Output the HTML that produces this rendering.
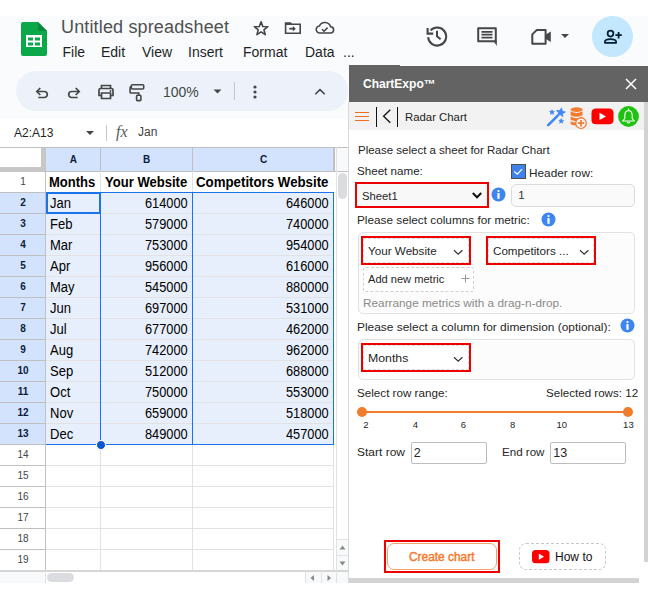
<!DOCTYPE html>
<html><head><meta charset="utf-8"><style>
html,body{margin:0;padding:0;}
body{width:648px;height:599px;position:relative;overflow:hidden;background:#fff;font-family:"Liberation Sans", sans-serif;}
body>div{position:absolute;}
.t{white-space:nowrap;}
</style></head><body>
<div style="left:0px;top:0px;width:648px;height:16px;background:#fff"></div>
<div style="left:0px;top:16px;width:648px;height:103px;background:#f9fbfd"></div>
<div style="left:0px;top:119px;width:349px;height:28px;background:#fff"></div>
<svg style="position:absolute;left:21px;top:22px;" width="26" height="34" viewBox="0 0 26 34">
<path d="M2 0 H17 L26 9 V32 Q26 34 24 34 H2 Q0 34 0 32 V2 Q0 0 2 0Z" fill="#0ba84a"/>
<path d="M17 0 L26 9 H19 Q17 9 17 7Z" fill="#0a8a3c"/>
<rect x="5" y="13" width="16" height="12" fill="#fff"/>
<rect x="7" y="15.5" width="5" height="3" fill="#0ba84a"/>
<rect x="14" y="15.5" width="5" height="3" fill="#0ba84a"/>
<rect x="7" y="20.5" width="5" height="3" fill="#0ba84a"/>
<rect x="14" y="20.5" width="5" height="3" fill="#0ba84a"/>
</svg>
<div class="t" style="left:61px;top:17.76px;font-size:18px;line-height:18px;color:#505050;font-weight:400;letter-spacing:0.15px">Untitled spreadsheet</div>
<svg style="position:absolute;left:252px;top:19px;" width="18" height="17" viewBox="0 0 18 17"><polygon points="9.10,2.80 10.86,7.47 15.85,7.71 11.95,10.83 13.27,15.64 9.10,12.90 4.93,15.64 6.25,10.83 2.35,7.71 7.34,7.47" fill="none" stroke="#444746" stroke-width="1.6" stroke-linejoin="round"/></svg>
<svg style="position:absolute;left:284px;top:21px;" width="18" height="14" viewBox="0 0 18 14"><path d="M1.6 3.2 H16.2 V12.2 H1.6Z" fill="none" stroke="#444746" stroke-width="1.6"/><path d="M0.8 1.2 H6.8 L8.3 3 H0.8Z" fill="#444746"/><path d="M5.3 7.7 H10.5" stroke="#444746" stroke-width="1.8"/><path d="M8.8 5 L11.8 7.7 L8.8 10.4Z" fill="#444746"/></svg>
<svg style="position:absolute;left:315px;top:21px;" width="20" height="14" viewBox="0 0 20 14"><path d="M5 12 H15.3 A3.1 3.1 0 0 0 15.6 5.8 A6 6 0 0 0 4.4 5 A3.5 3.5 0 0 0 5 12Z" fill="none" stroke="#444746" stroke-width="1.6"/><path d="M7 8.3 L9 10.2 L12.6 6.6" fill="none" stroke="#444746" stroke-width="1.5"/></svg>
<div class="t" style="left:62.5px;top:44.75px;font-size:14px;line-height:14px;color:#1f1f1f;font-weight:400;">File</div>
<div class="t" style="left:101px;top:44.75px;font-size:14px;line-height:14px;color:#1f1f1f;font-weight:400;">Edit</div>
<div class="t" style="left:142px;top:44.75px;font-size:14px;line-height:14px;color:#1f1f1f;font-weight:400;">View</div>
<div class="t" style="left:188px;top:44.75px;font-size:14px;line-height:14px;color:#1f1f1f;font-weight:400;">Insert</div>
<div class="t" style="left:243px;top:44.75px;font-size:14px;line-height:14px;color:#1f1f1f;font-weight:400;">Format</div>
<div class="t" style="left:305px;top:44.75px;font-size:14px;line-height:14px;color:#1f1f1f;font-weight:400;">Data</div>
<div class="t" style="left:343px;top:44.75px;font-size:14px;line-height:14px;color:#1f1f1f;font-weight:400;">...</div>
<svg style="position:absolute;left:425px;top:24px;" width="24" height="24" viewBox="0 0 24 24"><path d="M5.6 6.4 A9 9 0 1 1 3.2 13.2" fill="none" stroke="#444746" stroke-width="2.1"/><path d="M2.6 4 V9.6 H8.2" fill="none" stroke="#444746" stroke-width="2.1"/><path d="M12 6.8 V12.3 L15.6 15.2" fill="none" stroke="#444746" stroke-width="2"/></svg>
<svg style="position:absolute;left:476px;top:26px;" width="22" height="22" viewBox="0 0 22 22"><path d="M2.2 2.2 H19.8 V15.2 H2.2Z" fill="none" stroke="#444746" stroke-width="2" stroke-linejoin="round"/><path d="M17.5 15 H20.8 V20 Z" fill="#444746"/><path d="M5.5 5.8 H16.5 M5.5 8.7 H16.5 M5.5 11.7 H16.5" stroke="#444746" stroke-width="1.8"/></svg>
<svg style="position:absolute;left:530px;top:28px;" width="24" height="18" viewBox="0 0 24 18"><path d="M6.6 2.1 H15.6 V15.8 H2.3 V6.4Z" fill="none" stroke="#444746" stroke-width="2" stroke-linejoin="round"/><path d="M15.6 6.7 L20.8 3.6 V13.9 L15.6 10.8Z" fill="#444746"/></svg>
<svg style="position:absolute;left:560px;top:33px;" width="10" height="6" viewBox="0 0 10 6"><path d="M1 1 H9 L5 5Z" fill="#444746"/></svg>
<svg style="position:absolute;left:592px;top:16px;" width="41" height="41" viewBox="0 0 41 41"><circle cx="20.5" cy="20.5" r="20.5" fill="#c2e7ff"/><circle cx="18.5" cy="17.6" r="2.9" fill="none" stroke="#001d35" stroke-width="1.75"/><path d="M12.9 26.8 V26 Q12.9 23.2 18.5 23.2 Q24.1 23.2 24.1 26 V26.8Z" fill="none" stroke="#001d35" stroke-width="1.75" stroke-linejoin="round"/><path d="M26.6 16 V22.4 M23.4 19.2 H29.8" stroke="#001d35" stroke-width="1.75"/></svg>
<div style="left:16px;top:71px;width:331.5px;height:40px;background:#edf2fa;border-radius:20px"></div>
<svg style="position:absolute;left:34px;top:85px;" width="16" height="16" viewBox="0 0 16 16"><path d="M3 6.5 H10.3 A3 3 0 0 1 10.3 12.5 H4.3" fill="none" stroke="#444746" stroke-width="1.7"/><path d="M6.3 3 L2.8 6.5 L6.3 10" fill="none" stroke="#444746" stroke-width="1.7"/></svg>
<svg style="position:absolute;left:66px;top:85px;" width="16" height="16" viewBox="0 0 16 16"><path d="M13 6.5 H5.7 A3 3 0 0 0 5.7 12.5 H11.7" fill="none" stroke="#444746" stroke-width="1.7"/><path d="M9.7 3 L13.2 6.5 L9.7 10" fill="none" stroke="#444746" stroke-width="1.7"/></svg>
<svg style="position:absolute;left:97px;top:84px;" width="18" height="16" viewBox="0 0 18 16"><path d="M4.5 4.5 V1.5 H13.5 V4.5" fill="none" stroke="#444746" stroke-width="1.7"/><path d="M4 11.5 H2 V6 Q2 4.5 3.5 4.5 H14.5 Q16 4.5 16 6 V11.5 H14" fill="none" stroke="#444746" stroke-width="1.7"/><path d="M4.5 9 H13.5 V14.5 H4.5Z" fill="none" stroke="#444746" stroke-width="1.7"/><circle cx="13.5" cy="7" r="0.9" fill="#444746"/></svg>
<svg style="position:absolute;left:129px;top:83px;" width="16" height="19" viewBox="0 0 16 19"><rect x="2.3" y="1.7" width="12.4" height="4.3" rx="1" fill="none" stroke="#444746" stroke-width="1.6"/><path d="M2.3 3.8 H1.9 Q1.1 3.8 1.1 4.6 V9.2 Q1.1 10 1.9 10 H9.7 V12.4" fill="none" stroke="#444746" stroke-width="1.6"/><rect x="7.6" y="12.3" width="4.3" height="5.3" rx="0.9" fill="none" stroke="#444746" stroke-width="1.6"/></svg>
<div class="t" style="left:163px;top:84.65px;font-size:14px;line-height:14px;color:#444746;font-weight:400;">100%</div>
<svg style="position:absolute;left:213px;top:89px;" width="9" height="5" viewBox="0 0 9 5"><path d="M0.5 0.5 H8.5 L4.5 4.5Z" fill="#444746"/></svg>
<div style="left:234px;top:82px;width:1px;height:18px;background:#c7c7c7"></div>
<svg style="position:absolute;left:252px;top:85px;" width="6" height="14" viewBox="0 0 6 14"><circle cx="3" cy="2" r="1.6" fill="#444746"/><circle cx="3" cy="7" r="1.6" fill="#444746"/><circle cx="3" cy="12" r="1.6" fill="#444746"/></svg>
<svg style="position:absolute;left:313px;top:87px;" width="14" height="9" viewBox="0 0 14 9"><path d="M2.3 7.3 L7 2.6 L11.7 7.3" fill="none" stroke="#444746" stroke-width="1.6"/></svg>
<div class="t" style="left:14px;top:126.84px;font-size:12px;line-height:12px;color:#1f1f1f;font-weight:400;transform:scaleY(1.08);transform-origin:0 100%">A2:A13</div>
<svg style="position:absolute;left:85px;top:130px;" width="10" height="6" viewBox="0 0 10 6"><path d="M1 1 H9 L5 5Z" fill="#444746"/></svg>
<div style="left:106px;top:125px;width:1px;height:16px;background:#c7c7c7"></div>
<div class="t" style="left:116px;top:124.46px;font-size:16px;line-height:16px;color:#5a5a5a;font-weight:400;font-family:'Liberation Serif',serif;"><i>fx</i></div>
<div class="t" style="left:138px;top:126.34px;font-size:12px;line-height:12px;color:#444;font-weight:400;">Jan</div>
<div style="left:0px;top:147px;width:349px;height:436px;background:#fff"></div>
<div style="left:0px;top:147px;width:349px;height:1px;background:#c0c0c0"></div>
<div style="left:0px;top:148px;width:46px;height:24px;background:#fff"></div>
<div style="left:41px;top:148px;width:5px;height:24px;background:#c7c7c7"></div>
<div style="left:0px;top:167px;width:46px;height:5px;background:#c7c7c7"></div>
<div style="left:46px;top:148px;width:288px;height:23px;background:#d3e3fd"></div>
<div style="left:334px;top:148px;width:15px;height:23px;background:#f8f9fa"></div>
<div style="left:46px;top:171px;width:303px;height:1px;background:#c0c0c0"></div>
<div style="left:100px;top:148px;width:1px;height:23px;background:#c0c0c0"></div>
<div style="left:192px;top:148px;width:1px;height:23px;background:#c0c0c0"></div>
<div style="left:334px;top:148px;width:1px;height:23px;background:#c0c0c0"></div>
<div class="t" style="left:-126.7px;width:400px;text-align:center;top:154.84px;font-size:10px;line-height:10px;color:#0b1d3a;font-weight:700;">A</div>
<div class="t" style="left:-53.5px;width:400px;text-align:center;top:154.84px;font-size:10px;line-height:10px;color:#0b1d3a;font-weight:700;">B</div>
<div class="t" style="left:63.5px;width:400px;text-align:center;top:154.84px;font-size:10px;line-height:10px;color:#0b1d3a;font-weight:700;">C</div>
<div style="left:45px;top:171px;width:1px;height:399px;background:#c0c0c0"></div>
<div style="left:0px;top:193px;width:45px;height:251px;background:#d3e3fd"></div>
<div style="left:46px;top:192px;width:288px;height:252px;background:#e7effc"></div>
<div style="left:0px;top:192px;width:45px;height:1px;background:#c0c0c0"></div>
<div style="left:46px;top:192px;width:288px;height:1px;background:#e2e2e3"></div>
<div style="left:0px;top:213px;width:45px;height:1px;background:#c0c0c0"></div>
<div style="left:46px;top:213px;width:288px;height:1px;background:#e2e2e3"></div>
<div style="left:0px;top:234px;width:45px;height:1px;background:#c0c0c0"></div>
<div style="left:46px;top:234px;width:288px;height:1px;background:#e2e2e3"></div>
<div style="left:0px;top:255px;width:45px;height:1px;background:#c0c0c0"></div>
<div style="left:46px;top:255px;width:288px;height:1px;background:#e2e2e3"></div>
<div style="left:0px;top:276px;width:45px;height:1px;background:#c0c0c0"></div>
<div style="left:46px;top:276px;width:288px;height:1px;background:#e2e2e3"></div>
<div style="left:0px;top:297px;width:45px;height:1px;background:#c0c0c0"></div>
<div style="left:46px;top:297px;width:288px;height:1px;background:#e2e2e3"></div>
<div style="left:0px;top:318px;width:45px;height:1px;background:#c0c0c0"></div>
<div style="left:46px;top:318px;width:288px;height:1px;background:#e2e2e3"></div>
<div style="left:0px;top:339px;width:45px;height:1px;background:#c0c0c0"></div>
<div style="left:46px;top:339px;width:288px;height:1px;background:#e2e2e3"></div>
<div style="left:0px;top:360px;width:45px;height:1px;background:#c0c0c0"></div>
<div style="left:46px;top:360px;width:288px;height:1px;background:#e2e2e3"></div>
<div style="left:0px;top:381px;width:45px;height:1px;background:#c0c0c0"></div>
<div style="left:46px;top:381px;width:288px;height:1px;background:#e2e2e3"></div>
<div style="left:0px;top:402px;width:45px;height:1px;background:#c0c0c0"></div>
<div style="left:46px;top:402px;width:288px;height:1px;background:#e2e2e3"></div>
<div style="left:0px;top:423px;width:45px;height:1px;background:#c0c0c0"></div>
<div style="left:46px;top:423px;width:288px;height:1px;background:#e2e2e3"></div>
<div style="left:0px;top:444px;width:45px;height:1px;background:#c0c0c0"></div>
<div style="left:46px;top:444px;width:288px;height:1px;background:#e2e2e3"></div>
<div style="left:0px;top:465px;width:45px;height:1px;background:#c0c0c0"></div>
<div style="left:46px;top:465px;width:288px;height:1px;background:#e2e2e3"></div>
<div style="left:0px;top:486px;width:45px;height:1px;background:#c0c0c0"></div>
<div style="left:46px;top:486px;width:288px;height:1px;background:#e2e2e3"></div>
<div style="left:0px;top:507px;width:45px;height:1px;background:#c0c0c0"></div>
<div style="left:46px;top:507px;width:288px;height:1px;background:#e2e2e3"></div>
<div style="left:0px;top:528px;width:45px;height:1px;background:#c0c0c0"></div>
<div style="left:46px;top:528px;width:288px;height:1px;background:#e2e2e3"></div>
<div style="left:0px;top:549px;width:45px;height:1px;background:#c0c0c0"></div>
<div style="left:46px;top:549px;width:288px;height:1px;background:#e2e2e3"></div>
<div style="left:0px;top:570px;width:45px;height:1px;background:#c0c0c0"></div>
<div style="left:46px;top:570px;width:288px;height:1px;background:#e2e2e3"></div>
<div style="left:100px;top:171px;width:1px;height:399px;background:#e2e2e3"></div>
<div style="left:192px;top:171px;width:1px;height:399px;background:#e2e2e3"></div>
<div style="left:333px;top:147px;width:1px;height:25px;background:#c0c0c0"></div>
<div style="left:333px;top:444px;width:1px;height:126px;background:#e2e2e3"></div>
<div class="t" style="left:-177px;width:400px;text-align:center;top:177.03px;font-size:10px;line-height:10px;color:#444;font-weight:400;">1</div>
<div class="t" style="left:-177px;width:400px;text-align:center;top:198.03px;font-size:10px;line-height:10px;color:#0b1d3a;font-weight:700;">2</div>
<div class="t" style="left:-177px;width:400px;text-align:center;top:219.03px;font-size:10px;line-height:10px;color:#0b1d3a;font-weight:700;">3</div>
<div class="t" style="left:-177px;width:400px;text-align:center;top:240.03px;font-size:10px;line-height:10px;color:#0b1d3a;font-weight:700;">4</div>
<div class="t" style="left:-177px;width:400px;text-align:center;top:261.04px;font-size:10px;line-height:10px;color:#0b1d3a;font-weight:700;">5</div>
<div class="t" style="left:-177px;width:400px;text-align:center;top:282.04px;font-size:10px;line-height:10px;color:#0b1d3a;font-weight:700;">6</div>
<div class="t" style="left:-177px;width:400px;text-align:center;top:303.04px;font-size:10px;line-height:10px;color:#0b1d3a;font-weight:700;">7</div>
<div class="t" style="left:-177px;width:400px;text-align:center;top:324.04px;font-size:10px;line-height:10px;color:#0b1d3a;font-weight:700;">8</div>
<div class="t" style="left:-177px;width:400px;text-align:center;top:345.04px;font-size:10px;line-height:10px;color:#0b1d3a;font-weight:700;">9</div>
<div class="t" style="left:-177px;width:400px;text-align:center;top:366.04px;font-size:10px;line-height:10px;color:#0b1d3a;font-weight:700;">10</div>
<div class="t" style="left:-177px;width:400px;text-align:center;top:387.04px;font-size:10px;line-height:10px;color:#0b1d3a;font-weight:700;">11</div>
<div class="t" style="left:-177px;width:400px;text-align:center;top:408.04px;font-size:10px;line-height:10px;color:#0b1d3a;font-weight:700;">12</div>
<div class="t" style="left:-177px;width:400px;text-align:center;top:429.04px;font-size:10px;line-height:10px;color:#0b1d3a;font-weight:700;">13</div>
<div class="t" style="left:-177px;width:400px;text-align:center;top:450.04px;font-size:10px;line-height:10px;color:#444;font-weight:400;">14</div>
<div class="t" style="left:-177px;width:400px;text-align:center;top:471.04px;font-size:10px;line-height:10px;color:#444;font-weight:400;">15</div>
<div class="t" style="left:-177px;width:400px;text-align:center;top:492.04px;font-size:10px;line-height:10px;color:#444;font-weight:400;">16</div>
<div class="t" style="left:-177px;width:400px;text-align:center;top:513.03px;font-size:10px;line-height:10px;color:#444;font-weight:400;">17</div>
<div class="t" style="left:-177px;width:400px;text-align:center;top:534.03px;font-size:10px;line-height:10px;color:#444;font-weight:400;">18</div>
<div class="t" style="left:-177px;width:400px;text-align:center;top:555.03px;font-size:10px;line-height:10px;color:#444;font-weight:400;">19</div>
<div class="t" style="left:49.40px;top:175.15px;font-size:14px;line-height:14px;color:#000;font-weight:700;transform:scaleX(0.9283);transform-origin:0 0;">Months</div>
<div class="t" style="left:104.70px;top:175.15px;font-size:14px;line-height:14px;color:#000;font-weight:700;transform:scaleX(0.9320);transform-origin:0 0;">Your Website</div>
<div class="t" style="left:196.00px;top:175.15px;font-size:14px;line-height:14px;color:#000;font-weight:700;transform:scaleX(0.9479);transform-origin:0 0;">Competitors Website</div>
<div class="t" style="left:49.60px;top:196.15px;font-size:14px;line-height:14px;color:#000;font-weight:400;transform:scaleX(0.9300);transform-origin:0 0;">Jan</div>
<div class="t" style="left:145.10px;top:196.15px;font-size:14px;line-height:14px;color:#000;font-weight:400;transform:scaleX(0.9145);transform-origin:0 0;">614000</div>
<div class="t" style="left:286.10px;top:196.15px;font-size:14px;line-height:14px;color:#000;font-weight:400;transform:scaleX(0.9145);transform-origin:0 0;">646000</div>
<div class="t" style="left:49.60px;top:217.15px;font-size:14px;line-height:14px;color:#000;font-weight:400;transform:scaleX(0.9300);transform-origin:0 0;">Feb</div>
<div class="t" style="left:145.10px;top:217.15px;font-size:14px;line-height:14px;color:#000;font-weight:400;transform:scaleX(0.9145);transform-origin:0 0;">579000</div>
<div class="t" style="left:286.10px;top:217.15px;font-size:14px;line-height:14px;color:#000;font-weight:400;transform:scaleX(0.9145);transform-origin:0 0;">740000</div>
<div class="t" style="left:49.60px;top:238.15px;font-size:14px;line-height:14px;color:#000;font-weight:400;transform:scaleX(0.9300);transform-origin:0 0;">Mar</div>
<div class="t" style="left:145.10px;top:238.15px;font-size:14px;line-height:14px;color:#000;font-weight:400;transform:scaleX(0.9145);transform-origin:0 0;">753000</div>
<div class="t" style="left:286.10px;top:238.15px;font-size:14px;line-height:14px;color:#000;font-weight:400;transform:scaleX(0.9145);transform-origin:0 0;">954000</div>
<div class="t" style="left:49.60px;top:259.15px;font-size:14px;line-height:14px;color:#000;font-weight:400;transform:scaleX(0.9300);transform-origin:0 0;">Apr</div>
<div class="t" style="left:145.10px;top:259.15px;font-size:14px;line-height:14px;color:#000;font-weight:400;transform:scaleX(0.9145);transform-origin:0 0;">956000</div>
<div class="t" style="left:286.10px;top:259.15px;font-size:14px;line-height:14px;color:#000;font-weight:400;transform:scaleX(0.9145);transform-origin:0 0;">616000</div>
<div class="t" style="left:49.60px;top:280.15px;font-size:14px;line-height:14px;color:#000;font-weight:400;transform:scaleX(0.9300);transform-origin:0 0;">May</div>
<div class="t" style="left:145.10px;top:280.15px;font-size:14px;line-height:14px;color:#000;font-weight:400;transform:scaleX(0.9145);transform-origin:0 0;">545000</div>
<div class="t" style="left:286.10px;top:280.15px;font-size:14px;line-height:14px;color:#000;font-weight:400;transform:scaleX(0.9145);transform-origin:0 0;">880000</div>
<div class="t" style="left:49.60px;top:301.15px;font-size:14px;line-height:14px;color:#000;font-weight:400;transform:scaleX(0.9300);transform-origin:0 0;">Jun</div>
<div class="t" style="left:145.10px;top:301.15px;font-size:14px;line-height:14px;color:#000;font-weight:400;transform:scaleX(0.9145);transform-origin:0 0;">697000</div>
<div class="t" style="left:286.10px;top:301.15px;font-size:14px;line-height:14px;color:#000;font-weight:400;transform:scaleX(0.9145);transform-origin:0 0;">531000</div>
<div class="t" style="left:49.60px;top:322.15px;font-size:14px;line-height:14px;color:#000;font-weight:400;transform:scaleX(0.9300);transform-origin:0 0;">Jul</div>
<div class="t" style="left:145.10px;top:322.15px;font-size:14px;line-height:14px;color:#000;font-weight:400;transform:scaleX(0.9145);transform-origin:0 0;">677000</div>
<div class="t" style="left:286.10px;top:322.15px;font-size:14px;line-height:14px;color:#000;font-weight:400;transform:scaleX(0.9145);transform-origin:0 0;">462000</div>
<div class="t" style="left:49.60px;top:343.15px;font-size:14px;line-height:14px;color:#000;font-weight:400;transform:scaleX(0.9300);transform-origin:0 0;">Aug</div>
<div class="t" style="left:145.10px;top:343.15px;font-size:14px;line-height:14px;color:#000;font-weight:400;transform:scaleX(0.9145);transform-origin:0 0;">742000</div>
<div class="t" style="left:286.10px;top:343.15px;font-size:14px;line-height:14px;color:#000;font-weight:400;transform:scaleX(0.9145);transform-origin:0 0;">962000</div>
<div class="t" style="left:49.60px;top:364.15px;font-size:14px;line-height:14px;color:#000;font-weight:400;transform:scaleX(0.9300);transform-origin:0 0;">Sep</div>
<div class="t" style="left:145.10px;top:364.15px;font-size:14px;line-height:14px;color:#000;font-weight:400;transform:scaleX(0.9145);transform-origin:0 0;">512000</div>
<div class="t" style="left:286.10px;top:364.15px;font-size:14px;line-height:14px;color:#000;font-weight:400;transform:scaleX(0.9145);transform-origin:0 0;">688000</div>
<div class="t" style="left:49.60px;top:385.15px;font-size:14px;line-height:14px;color:#000;font-weight:400;transform:scaleX(0.9300);transform-origin:0 0;">Oct</div>
<div class="t" style="left:145.10px;top:385.15px;font-size:14px;line-height:14px;color:#000;font-weight:400;transform:scaleX(0.9145);transform-origin:0 0;">750000</div>
<div class="t" style="left:286.10px;top:385.15px;font-size:14px;line-height:14px;color:#000;font-weight:400;transform:scaleX(0.9145);transform-origin:0 0;">553000</div>
<div class="t" style="left:49.60px;top:406.15px;font-size:14px;line-height:14px;color:#000;font-weight:400;transform:scaleX(0.9300);transform-origin:0 0;">Nov</div>
<div class="t" style="left:145.10px;top:406.15px;font-size:14px;line-height:14px;color:#000;font-weight:400;transform:scaleX(0.9145);transform-origin:0 0;">659000</div>
<div class="t" style="left:286.10px;top:406.15px;font-size:14px;line-height:14px;color:#000;font-weight:400;transform:scaleX(0.9145);transform-origin:0 0;">518000</div>
<div class="t" style="left:49.60px;top:427.15px;font-size:14px;line-height:14px;color:#000;font-weight:400;transform:scaleX(0.9300);transform-origin:0 0;">Dec</div>
<div class="t" style="left:145.10px;top:427.15px;font-size:14px;line-height:14px;color:#000;font-weight:400;transform:scaleX(0.9145);transform-origin:0 0;">849000</div>
<div class="t" style="left:286.10px;top:427.15px;font-size:14px;line-height:14px;color:#000;font-weight:400;transform:scaleX(0.9145);transform-origin:0 0;">457000</div>
<div style="left:46px;top:192px;width:288px;height:1px;background:#1a73e8"></div>
<div style="left:46px;top:444px;width:288px;height:1px;background:#1a73e8"></div>
<div style="left:333px;top:192px;width:1px;height:252px;background:#1a73e8"></div>
<div style="left:100px;top:192px;width:1px;height:252px;background:#1a73e8"></div>
<div style="left:192px;top:192px;width:1px;height:252px;background:#1a73e8"></div>
<div style="left:46px;top:192px;width:55px;height:22px;border:2px solid #1a73e8;box-sizing:border-box"></div>
<div style="left:95.5px;top:439.5px;width:8.5px;height:8.5px;border-radius:50%;background:#0b57d0;border:1px solid #fff"></div>
<div style="left:335px;top:148px;width:13px;height:23px;background:#f8f9fa"></div>
<div style="left:335px;top:172px;width:13px;height:398px;background:#fff"></div>
<div style="left:336px;top:147px;width:1px;height:436px;background:#e2e2e3"></div>
<div style="left:348px;top:147px;width:1px;height:436px;background:#e2e2e3"></div>
<div style="left:338px;top:173px;width:9px;height:26px;background:#dadce0;border-radius:4.5px"></div>
<div style="left:337px;top:539px;width:11px;height:32px;background:#f8f9fa"></div>
<div style="left:337px;top:539px;width:11px;height:1px;background:#e2e2e3"></div>
<div style="left:337px;top:555px;width:11px;height:1px;background:#e2e2e3"></div>
<svg style="position:absolute;left:339px;top:545px;" width="7" height="5" viewBox="0 0 7 5"><path d="M0.5 4.5 L3.5 0.5 L6.5 4.5Z" fill="#888"/></svg>
<svg style="position:absolute;left:339px;top:561px;" width="7" height="5" viewBox="0 0 7 5"><path d="M0.5 0.5 H6.5 L3.5 4.5Z" fill="#888"/></svg>
<div style="left:0px;top:571px;width:349px;height:12px;background:#fff"></div>
<div style="left:0px;top:570px;width:348px;height:1.5px;background:#d6d6d6"></div>
<div style="left:0px;top:571.5px;width:45px;height:11.5px;background:#f8f9fa"></div>
<div style="left:45px;top:571px;width:1px;height:12px;background:#e2e2e3"></div>
<div style="left:47px;top:573px;width:27px;height:9px;background:#dadce0;border-radius:4.5px"></div>
<div style="left:305px;top:571.5px;width:43px;height:11.5px;background:#f8f9fa"></div>
<div style="left:304.5px;top:571px;width:1px;height:12px;background:#e2e2e3"></div>
<div style="left:320.5px;top:571px;width:1px;height:12px;background:#e2e2e3"></div>
<div style="left:336px;top:571px;width:1px;height:12px;background:#e2e2e3"></div>
<svg style="position:absolute;left:309.5px;top:575px;" width="5" height="6" viewBox="0 0 5 6"><path d="M4 0 V6 L0.5 3Z" fill="#888"/></svg>
<svg style="position:absolute;left:326.5px;top:575px;" width="5" height="6" viewBox="0 0 5 6"><path d="M0.5 0 V6 L4 3Z" fill="#888"/></svg>
<div style="left:0px;top:583px;width:648px;height:16px;background:#fff"></div>
<div style="left:348px;top:102px;width:1px;height:481px;background:#d9d9d9"></div>
<div style="left:349px;top:66px;width:299px;height:36px;background:#636363"></div>
<div style="left:349px;top:65px;width:51px;height:1px;background:#636363"></div>
<div class="t" style="left:362.50px;top:78.24px;font-size:12px;line-height:12px;color:#fff;font-weight:700;transform:scaleX(1.0006);transform-origin:0 0;">ChartExpo&trade;</div>
<svg style="position:absolute;left:624px;top:77px;" width="14" height="14" viewBox="0 0 14 14"><path d="M2 2 L12 12 M12 2 L2 12" stroke="#fff" stroke-width="1.5"/></svg>
<div style="left:349px;top:102px;width:295px;height:28px;background:#f2f2f2"></div>
<div style="left:349px;top:130px;width:295px;height:448px;background:#fff"></div>
<div style="left:644px;top:102px;width:4px;height:460px;background:#d3d3d3"></div>
<div style="left:349px;top:578px;width:290px;height:5px;background:#d3d3d3"></div>
<div style="left:355px;top:111.9px;width:14px;height:1.3px;background:#f36c1e"></div>
<div style="left:355px;top:115.9px;width:14px;height:1.3px;background:#f36c1e"></div>
<div style="left:355px;top:119.9px;width:14px;height:1.3px;background:#f36c1e"></div>
<div style="left:376.1px;top:107px;width:1.2px;height:20px;background:#111"></div>
<svg style="position:absolute;left:382px;top:108px;" width="10" height="16" viewBox="0 0 10 16"><path d="M8.3 1.8 L1.6 8.3 L8.3 14.8" fill="none" stroke="#111" stroke-width="1.3"/></svg>
<div style="left:396.9px;top:107px;width:1.2px;height:20px;background:#111"></div>
<div class="t" style="left:404.60px;top:112.09px;font-size:11px;line-height:11px;color:#222;font-weight:400;transform:scaleX(1.0318);transform-origin:0 0;">Radar Chart</div>
<svg style="position:absolute;left:546px;top:106px;" width="20" height="21" viewBox="0 0 20 21"><path d="M2.2 19.2 L11.5 9.8" stroke="#4285f4" stroke-width="2.6" stroke-linecap="round"/><polygon points="15.55,1.77 16.29,5.07 19.55,5.92 16.65,7.64 16.85,11.00 14.32,8.77 11.18,10.00 12.52,6.91 10.37,4.30 13.73,4.62" fill="#4285f4" stroke="#4285f4" stroke-width="0.6" stroke-linejoin="round"/><polygon points="6.00,3.70 6.69,5.35 8.47,5.50 7.11,6.66 7.53,8.40 6.00,7.47 4.47,8.40 4.89,6.66 3.53,5.50 5.31,5.35" fill="#4285f4" stroke="#4285f4" stroke-width="0.6" stroke-linejoin="round"/><polygon points="15.20,12.60 15.89,14.25 17.67,14.40 16.31,15.56 16.73,17.30 15.20,16.37 13.67,17.30 14.09,15.56 12.73,14.40 14.51,14.25" fill="#4285f4" stroke="#4285f4" stroke-width="0.6" stroke-linejoin="round"/></svg>
<svg style="position:absolute;left:570px;top:107px;" width="18" height="23" viewBox="0 0 18 23"><ellipse cx="6.6" cy="2.6" rx="6" ry="2.3" fill="#f47b30"/>
<path d="M0.6 4.3 Q6.6 7.6 12.6 4.3 V8.2 Q6.6 11.5 0.6 8.2Z" fill="#f47b30"/>
<path d="M0.6 9.6 Q6.6 12.9 12.6 9.6 V11.2 Q9.5 13 7 13.2 L6.8 14.2 Q3 14 0.6 12.8Z" fill="#f47b30"/>
<path d="M0.6 14.2 Q3 15.3 6.5 15.6 L7.2 18.6 Q3 18.4 0.6 17.2Z" fill="#f47b30"/>
<circle cx="11" cy="16.2" r="5.3" fill="#f2f2f2" stroke="#f47b30" stroke-width="1.2"/>
<path d="M11 13 V19.4 M7.8 16.2 H14.2" stroke="#f47b30" stroke-width="1.7"/></svg>
<svg style="position:absolute;left:591px;top:108px;" width="23" height="17" viewBox="0 0 23 17"><path d="M5 0.5 H18 Q22.5 0.5 22.5 5 V12 Q22.5 16.3 18 16.3 H5 Q0.5 16.3 0.5 12 V5 Q0.5 0.5 5 0.5Z" fill="#f00"/><path d="M8.5 4.7 L15 8.4 L8.5 12.1Z" fill="#fff"/></svg>
<svg style="position:absolute;left:617px;top:105px;" width="23" height="23" viewBox="0 0 23 23"><circle cx="11.5" cy="11.5" r="10.4" fill="#1ec30f"/><path d="M11.5 5.5 Q8 6 7.8 10 V13.5 L5.6 16 H17.4 L15.2 13.5 V10 Q15 6 11.5 5.5Z M10 17 Q11.5 19 13 17" fill="none" stroke="#fff" stroke-width="1.1" stroke-linejoin="round"/><path d="M11.5 3.6 V5.5" stroke="#fff" stroke-width="1.1"/></svg>
<div class="t" style="left:357.60px;top:144.89px;font-size:11px;line-height:11px;color:#262626;font-weight:400;transform:scaleX(1.0446);transform-origin:0 0;">Please select a sheet for Radar Chart</div>
<div class="t" style="left:357.10px;top:166.39px;font-size:11px;line-height:11px;color:#262626;font-weight:400;transform:scaleX(1.0550);transform-origin:0 0;">Sheet name:</div>
<div style="left:511px;top:164px;width:15px;height:15px;background:#3f82ea;border:1px solid #4d4d4d;box-sizing:border-box"></div>
<svg style="position:absolute;left:511px;top:164px;" width="15" height="15" viewBox="0 0 15 15"><path d="M3.3 7.6 L6.3 10.2 L11 5.1" fill="none" stroke="#fff" stroke-width="1.3"/></svg>
<div class="t" style="left:529.40px;top:167.89px;font-size:11px;line-height:11px;color:#262626;font-weight:400;transform:scaleX(1.0719);transform-origin:0 0;">Header row:</div>
<div style="left:355px;top:182px;width:134px;height:26px;border:2px solid #e00;box-sizing:border-box;background:#f8f8f8"></div>
<div class="t" style="left:362.30px;top:190.69px;font-size:11px;line-height:11px;color:#262626;font-weight:400;transform:scaleX(1.0238);transform-origin:0 0;">Sheet1</div>
<svg style="position:absolute;left:471px;top:191px;" width="12" height="9" viewBox="0 0 12 9"><path d="M1.8 2 L6 6.3 L10.2 2" fill="none" stroke="#111" stroke-width="2"/></svg>
<svg style="position:absolute;left:491.4px;top:187.4px;" width="15" height="15" viewBox="0 0 15 15"><circle cx="7.5" cy="7.5" r="7" fill="#3d85f0"/><circle cx="7.5" cy="4.1" r="1.15" fill="#fff"/><rect x="6.4" y="6.1" width="2.2" height="5.7" fill="#fff"/></svg>
<div style="left:511px;top:184px;width:124px;height:22.5px;border:1px solid #dcdcdc;box-sizing:border-box;border-radius:5px;background:#fafafa"></div>
<div class="t" style="left:518.30px;top:189.87px;font-size:11.5px;line-height:11.5px;color:#333;font-weight:400;transform:scaleX(1.0000);transform-origin:0 0;">1</div>
<div class="t" style="left:357.10px;top:214.79px;font-size:11px;line-height:11px;color:#262626;font-weight:400;transform:scaleX(1.0702);transform-origin:0 0;">Please select columns for metric:</div>
<svg style="position:absolute;left:540.5px;top:211.5px;" width="15" height="15" viewBox="0 0 15 15"><circle cx="7.5" cy="7.5" r="7" fill="#3d85f0"/><circle cx="7.5" cy="4.1" r="1.15" fill="#fff"/><rect x="6.4" y="6.1" width="2.2" height="5.7" fill="#fff"/></svg>
<div style="left:357.5px;top:232px;width:277px;height:81.5px;border:1px solid #e2e2e2;box-sizing:border-box;border-radius:5px;background:#fcfcfc"></div>
<div style="left:361px;top:236px;width:110px;height:28.5px;border:2px solid #e00;box-sizing:border-box;background:#fff"></div>
<div style="left:363px;top:238px;width:106px;height:24.5px;border:1px dashed #dcdcdc;box-sizing:border-box"></div>
<div class="t" style="left:368.30px;top:245.59px;font-size:11px;line-height:11px;color:#262626;font-weight:400;transform:scaleX(1.0610);transform-origin:0 0;">Your Website</div>
<svg style="position:absolute;left:453.3px;top:248.6px;" width="11" height="7" viewBox="0 0 11 7"><path d="M1 1.2 L5.2 5.2 L9.4 1.2" fill="none" stroke="#333" stroke-width="1.2"/></svg>
<div style="left:486px;top:236px;width:110px;height:28.5px;border:2px solid #e00;box-sizing:border-box;background:#fff"></div>
<div style="left:488px;top:238px;width:106px;height:24.5px;border:1px dashed #dcdcdc;box-sizing:border-box"></div>
<div class="t" style="left:493.30px;top:245.59px;font-size:11px;line-height:11px;color:#262626;font-weight:400;transform:scaleX(1.0573);transform-origin:0 0;">Competitors ...</div>
<svg style="position:absolute;left:578.5px;top:248.6px;" width="11" height="7" viewBox="0 0 11 7"><path d="M1 1.2 L5.2 5.2 L9.4 1.2" fill="none" stroke="#333" stroke-width="1.2"/></svg>
<div style="left:363px;top:267px;width:111px;height:25px;border:1px dashed #d0d0d0;box-sizing:border-box;border-radius:3px;background:#fff"></div>
<div class="t" style="left:367.50px;top:273.89px;font-size:11px;line-height:11px;color:#262626;font-weight:400;transform:scaleX(1.0067);transform-origin:0 0;">Add new metric</div>
<svg style="position:absolute;left:461px;top:274px;" width="9" height="9" viewBox="0 0 9 9"><path d="M4.5 0.5 V8.5 M0.5 4.5 H8.5" stroke="#999" stroke-width="1"/></svg>
<div class="t" style="left:363.40px;top:297.69px;font-size:11px;line-height:11px;color:#8a8a8a;font-weight:400;transform:scaleX(1.0724);transform-origin:0 0;">Rearrange metrics with a drag-n-drop.</div>
<div class="t" style="left:356.90px;top:321.69px;font-size:11px;line-height:11px;color:#262626;font-weight:400;transform:scaleX(1.0837);transform-origin:0 0;">Please select a column for dimension (optional):</div>
<svg style="position:absolute;left:619.5px;top:318.4px;" width="15" height="15" viewBox="0 0 15 15"><circle cx="7.5" cy="7.5" r="7" fill="#3d85f0"/><circle cx="7.5" cy="4.1" r="1.15" fill="#fff"/><rect x="6.4" y="6.1" width="2.2" height="5.7" fill="#fff"/></svg>
<div style="left:357.5px;top:339px;width:277px;height:40.5px;border:1px solid #e2e2e2;box-sizing:border-box;border-radius:5px;background:#fcfcfc"></div>
<div style="left:361px;top:343px;width:110px;height:28.5px;border:2px solid #e00;box-sizing:border-box;background:#fff"></div>
<div style="left:363px;top:345px;width:106px;height:24.5px;border:1px dashed #dcdcdc;box-sizing:border-box"></div>
<div class="t" style="left:368.30px;top:352.59px;font-size:11px;line-height:11px;color:#262626;font-weight:400;transform:scaleX(1.1170);transform-origin:0 0;">Months</div>
<svg style="position:absolute;left:453.3px;top:355.6px;" width="11" height="7" viewBox="0 0 11 7"><path d="M1 1.2 L5.2 5.2 L9.4 1.2" fill="none" stroke="#333" stroke-width="1.2"/></svg>
<div class="t" style="left:357.20px;top:388.19px;font-size:11px;line-height:11px;color:#262626;font-weight:400;transform:scaleX(1.0587);transform-origin:0 0;">Select row range:</div>
<div class="t" style="left:546.40px;top:388.19px;font-size:11px;line-height:11px;color:#262626;font-weight:400;transform:scaleX(1.0532);transform-origin:0 0;">Selected rows: 12</div>
<div style="left:362px;top:410.8px;width:266px;height:2.4px;background:#f07c2c"></div>
<div style="left:357px;top:407px;width:10px;height:10px;border-radius:50%;background:#f07c2c"></div>
<div style="left:623.3px;top:407px;width:10px;height:10px;border-radius:50%;background:#f07c2c"></div>
<div class="t" style="left:166px;width:400px;text-align:center;top:420.06px;font-size:9.5px;line-height:9.5px;color:#262626;font-weight:400;">2</div>
<div class="t" style="left:215.39999999999998px;width:400px;text-align:center;top:420.06px;font-size:9.5px;line-height:9.5px;color:#262626;font-weight:400;">4</div>
<div class="t" style="left:263.4px;width:400px;text-align:center;top:420.06px;font-size:9.5px;line-height:9.5px;color:#262626;font-weight:400;">6</div>
<div class="t" style="left:312.70000000000005px;width:400px;text-align:center;top:420.06px;font-size:9.5px;line-height:9.5px;color:#262626;font-weight:400;">8</div>
<div class="t" style="left:361.79999999999995px;width:400px;text-align:center;top:420.06px;font-size:9.5px;line-height:9.5px;color:#262626;font-weight:400;">10</div>
<div class="t" style="left:428.4px;width:400px;text-align:center;top:420.06px;font-size:9.5px;line-height:9.5px;color:#262626;font-weight:400;">13</div>
<div class="t" style="left:357.20px;top:447.19px;font-size:11px;line-height:11px;color:#262626;font-weight:400;transform:scaleX(1.0895);transform-origin:0 0;">Start row</div>
<div style="left:411.3px;top:442px;width:75.5px;height:21.5px;border:1px solid #bdbdbd;box-sizing:border-box;border-radius:2px;background:#fff"></div>
<div class="t" style="left:413.8px;top:446.82px;font-size:12.5px;line-height:12.5px;color:#262626;font-weight:400;">2</div>
<div class="t" style="left:502.30px;top:447.19px;font-size:11px;line-height:11px;color:#262626;font-weight:400;transform:scaleX(1.0528);transform-origin:0 0;">End row</div>
<div style="left:550px;top:442px;width:76px;height:21.5px;border:1px solid #bdbdbd;box-sizing:border-box;border-radius:2px;background:#fff"></div>
<div class="t" style="left:553.2px;top:446.82px;font-size:12.5px;line-height:12.5px;color:#262626;font-weight:400;">13</div>
<div style="left:384px;top:540px;width:116px;height:33px;border:2px solid #e00;box-sizing:border-box"></div>
<div style="left:387px;top:543px;width:110px;height:27px;border:1px solid #f3a36c;box-sizing:border-box;border-radius:7px;background:#fff"></div>
<div class="t" style="left:409.30px;top:550.84px;font-size:12px;line-height:12px;color:#f27a30;font-weight:400;transform:scaleX(0.9915);transform-origin:0 0;-webkit-text-stroke:0.45px #f27a30;">Create chart</div>
<div style="left:519.3px;top:543px;width:87px;height:27px;border:1px dashed #c8c8c8;box-sizing:border-box;border-radius:7px;background:#fff"></div>
<svg style="position:absolute;left:532px;top:550px;" width="18" height="14" viewBox="0 0 18 14"><path d="M3.5 0 H14 Q17.5 0 17.5 3.5 V9.8 Q17.5 13.3 14 13.3 H3.5 Q0 13.3 0 9.8 V3.5 Q0 0 3.5 0Z" fill="#f00"/><path d="M6.8 3.6 L12 6.65 L6.8 9.7Z" fill="#fff"/></svg>
<div class="t" style="left:555.40px;top:551.14px;font-size:12px;line-height:12px;color:#111;font-weight:400;transform:scaleX(1.0021);transform-origin:0 0;">How to</div>
</body></html>
